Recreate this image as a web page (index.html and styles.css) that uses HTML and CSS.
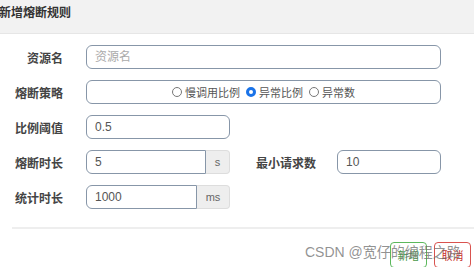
FILE: index.html
```html
<!DOCTYPE html>
<html lang="zh-CN">
<head>
    <meta charset="UTF-8">
    <meta name="viewport" content="width=device-width, initial-scale=1.0">
    <title>新增熔断规则</title>
    <link rel="stylesheet" href="styles.css">
</head>
<body>
    <div class="dialog">
        <header class="dialog-header">
            <h4>新增熔断规则</h4>
        </header>

        <form class="rule-form">
            <div class="row">
                <label class="label">资源名</label>
                <input class="field wide" type="text" placeholder="资源名">
            </div>
            <div class="row">
                <label class="label">熔断策略</label>
                <div class="field wide radios">
                    <label class="radio"><span class="dot"></span>慢调用比例</label>
                    <label class="radio"><span class="dot on"></span>异常比例</label>
                    <label class="radio"><span class="dot"></span>异常数</label>
                </div>
            </div>
            <div class="row">
                <label class="label">比例阈值</label>
                <input class="field short" type="text" value="0.5">
            </div>
            <div class="row">
                <label class="label">熔断时长</label>
                <div class="group">
                    <input class="field grouped w-s" type="text" value="5">
                    <span class="addon w-s-addon">s</span>
                </div>
                <label class="label label-2">最小请求数</label>
                <input class="field min-req" type="text" value="10">
            </div>
            <div class="row">
                <label class="label">统计时长</label>
                <div class="group">
                    <input class="field grouped w-ms" type="text" value="1000">
                    <span class="addon w-ms-addon">ms</span>
                </div>
            </div>
        </form>

        <footer class="dialog-footer">
            <button class="btn btn-ok" type="button">新增</button>
            <button class="btn btn-cancel" type="button">取消</button>
            <span class="watermark">CSDN @宽仔的编程之路</span>
        </footer>
    </div>
</body>
</html>
```

FILE: styles.css
```css
html, body {
    margin: 0;
    padding: 0;
    background: #fff;
}
body {
    font-family: "Liberation Sans", "Noto Sans CJK SC", sans-serif;
    font-size: 12px;
    color: #555;
    width: 474px;
    height: 267px;
    overflow: hidden;
}
.dialog-header {
    height: 33px;
    background: #f2f2f2;
    border-bottom: 1px solid #e6e6e6;
    display: flex;
    align-items: center;
}
.dialog-header h4 {
    margin: -11px 0 0 -1px;
    font-size: 12px;
    font-weight: bold;
    color: #333;
}
.rule-form {
    padding-top: 11px;
    display: flex;
    flex-direction: column;
    gap: 11px;
}
.row {
    display: flex;
    align-items: center;
    height: 24px;
}
.label {
    width: 63px;
    text-align: right;
    font-weight: bold;
    color: #444;
    margin-right: 23px;
    flex-shrink: 0;
}
.field {
    box-sizing: border-box;
    height: 24px;
    border: 1px solid #8796a8;
    border-radius: 6px;
    padding: 0 8px;
    font: inherit;
    color: #555;
    background: #fff;
    outline: none;
}
.field::placeholder { color: #aaa; }
.wide { width: 355px; }
.short { width: 144px; }
.radios {
    display: flex;
    align-items: center;
    justify-content: center;
    gap: 6px;
    font-size: 11px;
}
.radio {
    display: flex;
    align-items: center;
    gap: 3px;
    color: #555;
}
.dot {
    width: 10px;
    height: 10px;
    box-sizing: border-box;
    border: 1px solid #777;
    border-radius: 50%;
    background: #fff;
}
.dot.on {
    border: 3px solid #1a73e8;
    background: #fff;
}
.group {
    display: flex;
    width: 144px;
}
.grouped {
    border-radius: 6px 0 0 6px;
}
.w-s { width: 120px; }
.w-ms { width: 111px; }
.addon {
    box-sizing: border-box;
    height: 24px;
    display: flex;
    align-items: center;
    justify-content: center;
    background: #eee;
    border: 1px solid #ddd;
    border-left: none;
    border-radius: 0 4px 4px 0;
    color: #666;
    font-size: 11px;
}
.w-s-addon { width: 24px; }
.w-ms-addon { width: 33px; }
.label-2 {
    width: 86px;
    margin-right: 21px;
}
.min-req { width: 104px; }
.dialog-footer {
    position: relative;
    margin: 18px 0 0 12px;
    border-top: 2px solid #eee;
    height: 36px;
    display: flex;
    justify-content: flex-end;
    align-items: flex-start;
    gap: 7px;
    padding: 13px 3px 0 0;
}
.btn {
    font: inherit;
    font-size: 11px;
    height: 26px;
    width: 37px;
    padding: 0;
    background: #fff;
    border-radius: 4px;
    cursor: pointer;
}
.btn-ok {
    border: 1px solid #5cb85c;
    color: #4a9a4a;
}
.btn-cancel {
    border: 1px solid #d9534f;
    color: #c9302c;
}
.watermark {
    position: absolute;
    left: 293px;
    top: 12px;
    font-size: 14px;
    color: rgba(110, 110, 110, 0.75);
    white-space: nowrap;
    pointer-events: none;
}
```
